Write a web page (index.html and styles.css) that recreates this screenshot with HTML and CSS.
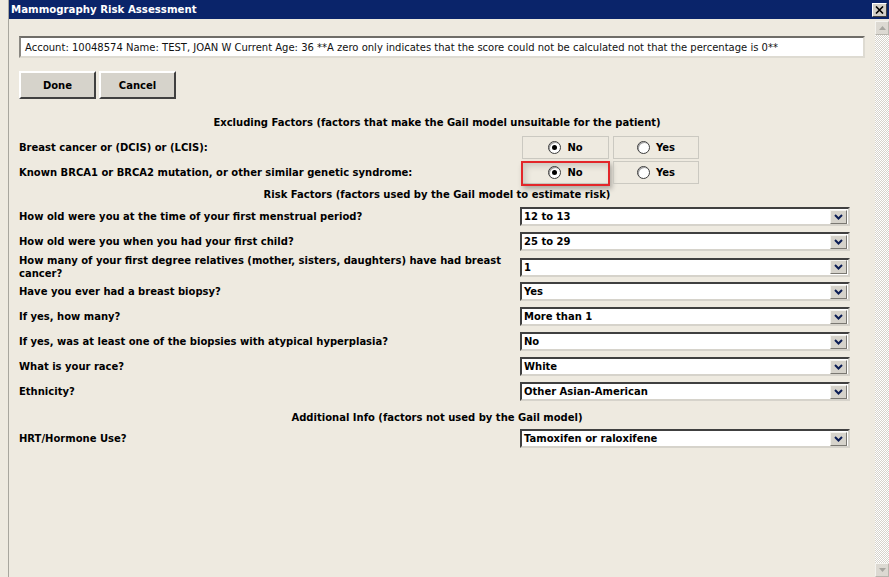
FILE: index.html
```html
<!DOCTYPE html>
<html>
<head>
<meta charset="utf-8">
<title>Mammography Risk Assessment</title>
<link rel="stylesheet" href="styles.css">
</head>
<body>
<div class="screen">
  <div class="edge"></div>
  <div class="dialog">
    <div class="titlebar">
      <span class="title">Mammography Risk Assessment</span>
      <div class="close-btn">
        <svg width="9" height="8" viewBox="0 0 9 8"><path d="M1 0.5 L8 7.5 M8 0.5 L1 7.5" stroke="#000" stroke-width="1.6"/></svg>
      </div>
    </div>
    <div class="body">
      <div class="content">
        <div class="infobox">Account: 10048574 Name: TEST, JOAN W Current Age: 36 **A zero only indicates that the score could not be calculated not that the percentage is 0**</div>
        <div class="buttons">
          <div class="btn">Done</div>
          <div class="btn">Cancel</div>
        </div>
        <div class="form">
          <div class="heading heading-first">Excluding Factors (factors that make the Gail model unsuitable for the patient)</div>
          <div class="row">
            <div class="label">Breast cancer or (DCIS) or (LCIS):</div>
            <div class="radios">
              <div class="radio-cell"><span class="radio checked"></span><span>No</span></div>
              <div class="radio-cell"><span class="radio"></span><span>Yes</span></div>
            </div>
          </div>
          <div class="row">
            <div class="label">Known BRCA1 or BRCA2 mutation, or other similar genetic syndrome:</div>
            <div class="radios">
              <div class="radio-cell highlighted"><span class="radio checked"></span><span>No</span><span class="highlight-ring"></span></div>
              <div class="radio-cell"><span class="radio"></span><span>Yes</span></div>
            </div>
          </div>
          <div class="heading heading-mid">Risk Factors (factors used by the Gail model to estimate risk)</div>
          <div class="row">
            <div class="label">How old were you at the time of your first menstrual period?</div>
            <div class="combo"><span class="combo-text">12 to 13</span><span class="combo-btn"><svg width="9" height="6" viewBox="0 0 9 6"><path d="M1 1 L4.5 4.5 L8 1" fill="none" stroke="#0b1d55" stroke-width="2"/></svg></span></div>
          </div>
          <div class="row">
            <div class="label">How old were you when you had your first child?</div>
            <div class="combo"><span class="combo-text">25 to 29</span><span class="combo-btn"><svg width="9" height="6" viewBox="0 0 9 6"><path d="M1 1 L4.5 4.5 L8 1" fill="none" stroke="#0b1d55" stroke-width="2"/></svg></span></div>
          </div>
          <div class="row">
            <div class="label label-wrap">How many of your first degree relatives (mother, sisters, daughters) have had breast cancer?</div>
            <div class="combo"><span class="combo-text">1</span><span class="combo-btn"><svg width="9" height="6" viewBox="0 0 9 6"><path d="M1 1 L4.5 4.5 L8 1" fill="none" stroke="#0b1d55" stroke-width="2"/></svg></span></div>
          </div>
          <div class="row">
            <div class="label">Have you ever had a breast biopsy?</div>
            <div class="combo"><span class="combo-text">Yes</span><span class="combo-btn"><svg width="9" height="6" viewBox="0 0 9 6"><path d="M1 1 L4.5 4.5 L8 1" fill="none" stroke="#0b1d55" stroke-width="2"/></svg></span></div>
          </div>
          <div class="row">
            <div class="label">If yes, how many?</div>
            <div class="combo"><span class="combo-text">More than 1</span><span class="combo-btn"><svg width="9" height="6" viewBox="0 0 9 6"><path d="M1 1 L4.5 4.5 L8 1" fill="none" stroke="#0b1d55" stroke-width="2"/></svg></span></div>
          </div>
          <div class="row">
            <div class="label">If yes, was at least one of the biopsies with atypical hyperplasia?</div>
            <div class="combo"><span class="combo-text">No</span><span class="combo-btn"><svg width="9" height="6" viewBox="0 0 9 6"><path d="M1 1 L4.5 4.5 L8 1" fill="none" stroke="#0b1d55" stroke-width="2"/></svg></span></div>
          </div>
          <div class="row">
            <div class="label">What is your race?</div>
            <div class="combo"><span class="combo-text">White</span><span class="combo-btn"><svg width="9" height="6" viewBox="0 0 9 6"><path d="M1 1 L4.5 4.5 L8 1" fill="none" stroke="#0b1d55" stroke-width="2"/></svg></span></div>
          </div>
          <div class="row">
            <div class="label">Ethnicity?</div>
            <div class="combo"><span class="combo-text">Other Asian-American</span><span class="combo-btn"><svg width="9" height="6" viewBox="0 0 9 6"><path d="M1 1 L4.5 4.5 L8 1" fill="none" stroke="#0b1d55" stroke-width="2"/></svg></span></div>
          </div>
          <div class="heading heading-last">Additional Info (factors not used by the Gail model)</div>
          <div class="row">
            <div class="label">HRT/Hormone Use?</div>
            <div class="combo"><span class="combo-text">Tamoxifen or raloxifene</span><span class="combo-btn"><svg width="9" height="6" viewBox="0 0 9 6"><path d="M1 1 L4.5 4.5 L8 1" fill="none" stroke="#0b1d55" stroke-width="2"/></svg></span></div>
          </div>
        </div>
      </div>
      <div class="scrollbar">
        <div class="sb-btn"><svg width="7" height="4" viewBox="0 0 7 4"><path d="M0 4 L3.5 0 L7 4 Z" fill="#a7a6a0"/></svg></div>
        <div class="sb-track"></div>
        <div class="sb-btn"><svg width="7" height="4" viewBox="0 0 7 4"><path d="M0 0 L3.5 4 L7 0 Z" fill="#a7a6a0"/></svg></div>
      </div>
    </div>
  </div>
</div>
</body>
</html>
```

FILE: styles.css
```css
* { box-sizing: border-box; }

html, body {
  margin: 0;
  padding: 0;
}

body {
  width: 889px;
  height: 577px;
  overflow: hidden;
  background: #eeeae0;
  font-family: "DejaVu Sans", Verdana, sans-serif;
  font-size: 10px;
  color: #000;
}

.screen {
  display: flex;
  width: 889px;
  height: 577px;
}

.edge {
  width: 9px;
  border-right: 1px solid #a8a69e;
  background: #eeeae0;
}

.dialog {
  flex: 1;
  display: flex;
  flex-direction: column;
  min-width: 0;
}

.titlebar {
  height: 19px;
  background: #0a246a;
  display: flex;
  align-items: center;
  padding-left: 2px;
  padding-right: 2px;
}

.title {
  color: #fff;
  font-weight: bold;
  font-size: 10.2px;
}

.close-btn {
  margin-left: auto;
  width: 15px;
  height: 14px;
  background: #d4d0c8;
  border: 1px solid;
  border-color: #ffffff #404040 #404040 #ffffff;
  display: flex;
  align-items: center;
  justify-content: center;
}

.body {
  flex: 1;
  display: flex;
  min-height: 0;
}

.content {
  flex: 1;
  padding: 17px 10px 0 10px;
}

.infobox {
  width: 846px;
  height: 22px;
  background: #fff;
  border-top: 2px solid #6f6d68;
  border-left: 2px solid #8a8882;
  border-right: 2px solid #dedbd2;
  border-bottom: 2px solid #dedbd2;
  padding-left: 4px;
  line-height: 19px;
  white-space: nowrap;
  color: #111;
}

.buttons {
  display: flex;
  gap: 3px;
  margin-top: 13px;
}

.btn {
  width: 77px;
  height: 28px;
  padding-top: 1px;
  background: #d6d3cb;
  border: 2px solid;
  border-color: #ffffff #404040 #404040 #ffffff;
  display: flex;
  align-items: center;
  justify-content: center;
  font-weight: bold;
}

.form {
  width: 836px;
  margin-top: 11px;
  font-weight: bold;
}

.heading {
  text-align: center;
}

.heading-first {
  height: 25px;
  padding-top: 2px;
  line-height: 22px;
}

.heading-mid {
  height: 19px;
  line-height: 19px;
}

.heading-last {
  height: 22px;
  padding-top: 4px;
  line-height: 20px;
}

.row {
  display: grid;
  grid-template-columns: 501px 330px;
  height: 25px;
  align-items: center;
}

.label {
  line-height: 13px;
}

.radios {
  display: flex;
  gap: 4px;
  padding-left: 2px;
}

.radio-cell {
  position: relative;
  width: 87px;
  height: 23px;
  border: 1px solid #cbc9c1;
  display: flex;
  align-items: center;
  justify-content: center;
  gap: 6px;
}

.radio-cell + .radio-cell {
  width: 86px;
}

.radio {
  width: 13px;
  height: 13px;
  border-radius: 50%;
  background: #fff;
  border: 1px solid #3c3c3c;
  box-shadow: inset 1px 1px 0 #a0a0a0;
  display: flex;
  align-items: center;
  justify-content: center;
}

.radio.checked::after {
  content: "";
  width: 5px;
  height: 5px;
  border-radius: 50%;
  background: #000;
}

.highlight-ring {
  position: absolute;
  left: -2px;
  top: -1px;
  right: -2px;
  bottom: -3px;
  border: 2px solid #e3262a;
  box-shadow: 2px 3px 5px rgba(0, 0, 0, 0.28), inset 3px 3px 6px rgba(0, 0, 0, 0.15);
  pointer-events: none;
}

.combo {
  width: 330px;
  height: 19px;
  background: #fff;
  border-top: 2px solid #404040;
  border-left: 2px solid #404040;
  border-right: 2px solid #d6d3cb;
  border-bottom: 2px solid #d6d3cb;
  display: flex;
  align-items: center;
  padding-left: 2px;
  padding-right: 1px;
}

.combo-text {
  flex: 1;
  white-space: nowrap;
  color: #000;
}

.combo-btn {
  width: 17px;
  height: 14px;
  background: #d6d3cb;
  border: 1px solid;
  border-color: #f4f3ee #7a7872 #7a7872 #f4f3ee;
  display: flex;
  align-items: center;
  justify-content: center;
}

.scrollbar {
  width: 14px;
  margin-top: 2px;
  display: flex;
  flex-direction: column;
}

.sb-btn {
  width: 14px;
  height: 14px;
  background: #dcd9d2;
  border: 1px solid;
  border-color: #f4f3ee #b8b6ae #b8b6ae #f4f3ee;
  display: flex;
  align-items: center;
  justify-content: center;
}

.sb-track {
  flex: 1;
  background-color: #ffffff;
  background-image: repeating-conic-gradient(#d6d3cb 0 25%, #ffffff 0 50%);
  background-size: 2px 2px;
}
```
